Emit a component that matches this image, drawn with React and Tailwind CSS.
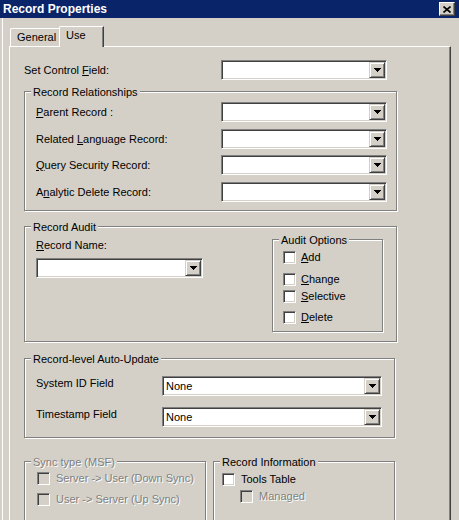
import React from "react";

const Arrow = () => (
  <svg width="7" height="4" viewBox="0 0 7 4" shapeRendering="crispEdges">
    <path d="M0 0h7v1H0zM1 1h5v1H1zM2 2h3v1H2zM3 3h1v1H3z" fill="#000" />
  </svg>
);

const Combo = ({ value = "", className = "" }) => (
  <div
    className={`flex h-[20px] shrink-0 border border-t-[#808080] border-l-[#808080] border-b-white border-r-white bg-white p-[1px] shadow-[inset_1px_1px_0_#404040,inset_-1px_-1px_0_#d4d0c8] ${className}`}
  >
    <span className="flex-1 pl-[2px] text-[11px] leading-[16px] text-black">{value}</span>
    <div className="flex h-[16px] w-[16px] items-center justify-center border border-t-[#d4d0c8] border-l-[#d4d0c8] border-b-[#404040] border-r-[#404040] bg-[#d4d0c8] shadow-[inset_1px_1px_0_#fff,inset_-1px_-1px_0_#808080]">
      <Arrow />
    </div>
  </div>
);

const Box = ({ disabled }) => (
  <div
    className={`h-[13px] w-[13px] shrink-0 border border-t-[#808080] border-l-[#808080] border-b-white border-r-white shadow-[inset_1px_1px_0_#404040,inset_-1px_-1px_0_#d4d0c8] ${
      disabled ? "bg-[#d4d0c8]" : "bg-white"
    }`}
  />
);

const Check = ({ label, disabled, gap = "ml-[5px]", className = "" }) => (
  <div className={`flex items-center ${className}`}>
    <Box disabled={disabled} />
    <span
      className={`${gap} leading-[13px] ${
        disabled ? "text-[#808080] [text-shadow:1px_1px_0_#fff]" : "text-black"
      }`}
    >
      {label}
    </span>
  </div>
);

const Group = ({ title, disabled, className = "", children }) => (
  <div
    className={`relative shrink-0 border border-[#808080] shadow-[inset_1px_1px_0_#fff,1px_1px_0_#fff] ${className}`}
  >
    <span
      className={`absolute left-[6px] top-[-6px] whitespace-nowrap bg-[#d4d0c8] px-[2px] leading-[13px] ${
        disabled ? "text-[#808080] [text-shadow:1px_1px_0_#fff]" : "text-black"
      }`}
    >
      {title}
    </span>
    {children}
  </div>
);

const relationRows = [
  { id: "parent", label: <><u>P</u>arent Record :</>, mt: "mt-[10px]" },
  { id: "lang", label: <>Related <u>L</u>anguage Record:</>, mt: "mt-[7px]" },
  { id: "query", label: <><u>Q</u>uery Security Record:</>, mt: "mt-[6px]" },
  { id: "analytic", label: <>A<u>n</u>alytic Delete Record:</>, mt: "mt-[7px]" },
];

const auditOptions = [
  { id: "add", label: <><u>A</u>dd</>, mt: "mt-[11px]" },
  { id: "change", label: <><u>C</u>hange</>, mt: "mt-[9px]" },
  { id: "selective", label: <><u>S</u>elective</>, mt: "mt-[4px]" },
  { id: "delete", label: <><u>D</u>elete</>, mt: "mt-[8px]" },
];

export default function App() {
  return (
    <div className="flex h-[520px] w-[459px] flex-col overflow-hidden bg-[#d4d0c8] font-['Liberation_Sans',Arial,sans-serif] text-[11px] text-black">
      {/* title bar */}
      <div className="flex h-[18px] shrink-0 items-center justify-between bg-[#0a246a] pl-[3px] pr-[4px]">
        <span className="text-[12px] font-bold leading-[14px] text-white">Record Properties</span>
        <div className="flex h-[14px] w-[16px] items-center justify-center border border-t-white border-l-white border-b-[#404040] border-r-[#404040] bg-[#d4d0c8] shadow-[inset_-1px_-1px_0_#808080]">
          <svg width="8" height="7" viewBox="0 0 8 7">
            <path d="M0.5 0.5L7.5 6.5M7.5 0.5L0.5 6.5" stroke="#000" strokeWidth="1.6" />
          </svg>
        </div>
      </div>

      <div className="ml-[2px] flex flex-1 flex-col border-l border-white">
        {/* tabs */}
        <div className="ml-[7px] mt-[8px] flex h-[20px] shrink-0 items-end">
          <div className="h-[18px] w-[49px] rounded-tl-[2px] border-t border-l border-white pl-[6px] pt-[2px] leading-[13px]">
            General
          </div>
          <div className="relative z-10 mb-[-1px] h-[21px] w-[45px] rounded-tl-[2px] border-t border-l border-r border-t-white border-l-white border-r-[#404040] bg-[#d4d0c8] pl-[6px] pt-[2px] leading-[13px] shadow-[inset_-1px_0_0_#808080]">
            Use
          </div>
        </div>

        {/* tab panel */}
        <div className="ml-[6px] mr-[8px] flex flex-1 flex-col border-t border-l border-r border-t-white border-l-white border-r-[#404040] pl-[14px] shadow-[inset_-1px_0_0_#808080]">
          <div className="mt-[13px] flex items-center">
            <span className="w-[197px]">
              Set Control <u>F</u>ield:
            </span>
            <Combo className="w-[166px]" />
          </div>

          <Group title="Record Relationships" className="mt-[11px] h-[120px] w-[373px]">
            <div className="flex flex-col pl-[11px]">
              {relationRows.map((row) => (
                <div key={row.id} className={`flex items-center ${row.mt}`}>
                  <span className="w-[185px]">{row.label}</span>
                  <Combo className="w-[166px]" />
                </div>
              ))}
            </div>
          </Group>

          <Group title="Record Audit" className="mt-[15px] flex h-[116px] w-[373px]">
            <div className="flex flex-col pl-[11px] pt-[11px]">
              <span className="leading-[14px]">
                <u>R</u>ecord Name:
              </span>
              <Combo className="mt-[6px] w-[167px]" />
            </div>
            <Group title="Audit Options" className="ml-auto mr-[13px] mt-[12px] flex h-[93px] w-[111px] flex-col pl-[10px]">
              {auditOptions.map((opt) => (
                <Check key={opt.id} label={opt.label} className={opt.mt} />
              ))}
            </Group>
          </Group>

          <Group title="Record-level Auto-Update" className="mt-[16px] h-[80px] w-[371px]">
            <div className="flex flex-col pl-[11px]">
              <div className="mt-[17px] flex items-start">
                <span className="w-[126px] leading-[14px]">System ID Field</span>
                <Combo value="None" className="w-[220px]" />
              </div>
              <div className="mt-[11px] flex items-start">
                <span className="w-[126px] leading-[14px]">Timestamp Field</span>
                <Combo value="None" className="w-[220px]" />
              </div>
            </div>
          </Group>

          <div className="mt-[23px] flex">
            <Group title="Sync type (MSF)" disabled className="h-[80px] w-[182px] pl-[12px]">
              <Check disabled gap="ml-[6px]" label="Server -> User (Down Sync)" className="mt-[10px]" />
              <Check disabled gap="ml-[6px]" label="User -> Server (Up Sync)" className="mt-[8px]" />
            </Group>
            <Group title="Record Information" className="ml-[7px] h-[80px] w-[182px] pl-[8px]">
              <Check gap="ml-[6px]" label="Tools Table" className="mt-[11px]" />
              <Check disabled gap="ml-[6px]" label="Managed" className="ml-[18px] mt-[4px]" />
            </Group>
          </div>
        </div>
      </div>
    </div>
  );
}
